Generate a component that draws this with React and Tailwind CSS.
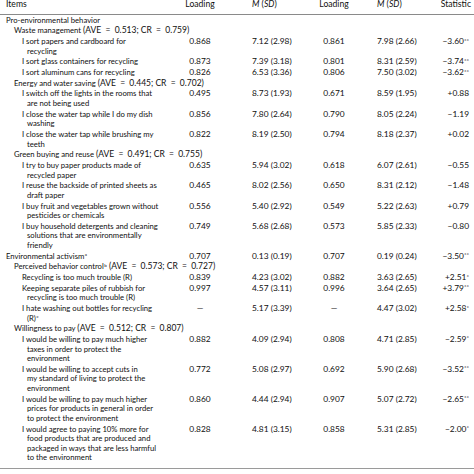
import React from "react";

const E = "\u2002=\u2002";
const rows = [
  { l: 0, t: ["Pro-environmental behavior"] },
  { l: 1, t: ["Waste management "], after: `(AVE${E}0.513; CR${E}0.759)` },
  { l: 2, t: ["I sort papers and cardboard for", "recycling"], v: ["0.868", "7.12 (2.98)", "0.861", "7.98 (2.66)", "−3.60", "**"] },
  { l: 2, t: ["I sort glass containers for recycling"], v: ["0.873", "7.39 (3.18)", "0.801", "8.31 (2.59)", "−3.74", "**"] },
  { l: 2, t: ["I sort aluminum cans for recycling"], v: ["0.826", "6.53 (3.36)", "0.806", "7.50 (3.02)", "−3.62", "**"] },
  { l: 1, t: ["Energy and water saving "], after: `(AVE${E}0.445; CR${E}0.702)` },
  { l: 2, t: ["I switch off the lights in the rooms that", "are not being used"], v: ["0.495", "8.73 (1.93)", "0.671", "8.59 (1.95)", "+0.88", ""] },
  { l: 2, t: ["I close the water tap while I do my dish", "washing"], v: ["0.856", "7.80 (2.64)", "0.790", "8.05 (2.24)", "−1.19", ""] },
  { l: 2, t: ["I close the water tap while brushing my", "teeth"], v: ["0.822", "8.19 (2.50)", "0.794", "8.18 (2.37)", "+0.02", ""] },
  { l: 1, t: ["Green buying and reuse "], after: `(AVE${E}0.491; CR${E}0.755)` },
  { l: 2, t: ["I try to buy paper products made of", "recycled paper"], v: ["0.635", "5.94 (3.02)", "0.618", "6.07 (2.61)", "−0.55", ""] },
  { l: 2, t: ["I reuse the backside of printed sheets as", "draft paper"], v: ["0.465", "8.02 (2.56)", "0.650", "8.31 (2.12)", "−1.48", ""] },
  { l: 2, t: ["I buy fruit and vegetables grown without", "pesticides or chemicals"], v: ["0.556", "5.40 (2.92)", "0.549", "5.22 (2.63)", "+0.79", ""] },
  { l: 2, t: ["I buy household detergents and cleaning", "solutions that are environmentally", "friendly"], v: ["0.749", "5.68 (2.68)", "0.573", "5.85 (2.33)", "−0.80", ""] },
  { l: 0, t: ["Environmental activism"], sup: "a", v: ["0.707", "0.13 (0.19)", "0.707", "0.19 (0.24)", "−3.50", "**"] },
  { l: 1, t: ["Perceived behavior control"], sup: "b", after: ` (AVE${E}0.573; CR${E}0.727)` },
  { l: 2, t: ["Recycling is too much trouble (R)"], v: ["0.839", "4.23 (3.02)", "0.882", "3.63 (2.65)", "+2.51", "*"] },
  { l: 2, t: ["Keeping separate piles of rubbish for", "recycling is too much trouble (R)"], v: ["0.997", "4.57 (3.11)", "0.996", "3.64 (2.65)", "+3.79", "**"] },
  { l: 2, t: ["I hate washing out bottles for recycling", "(R)"], sup: "c", v: ["—", "5.17 (3.39)", "—", "4.47 (3.02)", "+2.58", "*"] },
  { l: 1, t: ["Willingness to pay "], after: `(AVE${E}0.512; CR${E}0.807)` },
  { l: 2, t: ["I would be willing to pay much higher", "taxes in order to protect the", "environment"], v: ["0.882", "4.09 (2.94)", "0.808", "4.71 (2.85)", "−2.59", "*"] },
  { l: 2, t: ["I would be willing to accept cuts in", "my standard of living to protect the", "environment"], v: ["0.772", "5.08 (2.97)", "0.692", "5.90 (2.68)", "−3.52", "**"] },
  { l: 2, t: ["I would be willing to pay much higher", "prices for products in general in order", "to protect the environment"], v: ["0.860", "4.44 (2.94)", "0.907", "5.07 (2.72)", "−2.65", "**"] },
  { l: 2, t: ["I would agree to paying 10% more for", "food products that are produced and", "packaged in ways that are less harmful", "to the environment"], v: ["0.828", "4.81 (3.15)", "0.858", "5.31 (2.85)", "−2.00", "*"] },
];

const indent = ["pl-[6px]", "pl-[14px]", "pl-[22px]"];

function ItemText({ r }) {
  const last = r.t.length - 1;
  return (
    <div className={indent[r.l] + " text-[7.7px]"}>
      {r.t.map((line, i) => (
        <div key={i} className={i > 0 ? "pl-[5px] whitespace-nowrap" : "whitespace-nowrap"}>
          {line}
          {i === last && r.sup ? (
            <span className="relative -top-[2.5px] text-[4.5px] leading-none ml-[0.5px]">{r.sup}</span>
          ) : null}
          {i === last && r.after ? <span className="text-[8.5px]">{r.after}</span> : null}
        </div>
      ))}
    </div>
  );
}

export default function App() {
  return (
    <div
      className="w-[474px] h-[474px] bg-white text-[#0f0f0f] text-[8.4px] leading-[9.6px] overflow-hidden"
      style={{ fontFamily: "Lato, 'Open Sans', sans-serif" }}
    >
      <div className="grid grid-cols-[176px_48px_86px_48px_72px_39px] pb-[4px] border-b border-[#8a8a8a] text-[8.6px]">
        <div className="pl-[6px]">Items</div>
        <div className="text-center">Loading</div>
        <div className="pl-[28px]">
          <i>M</i> (<i>SD</i>)
        </div>
        <div className="text-center">Loading</div>
        <div className="pl-[19px]">
          <i>M</i> (<i>SD</i>)
        </div>
        <div className="text-right -mr-[2px] whitespace-nowrap">Statistic</div>
      </div>
      <div className="pb-[5px] border-b-[1.5px] border-[#9a9a9a]">
        {rows.map((r, idx) => (
          <div key={idx} className="grid grid-cols-[176px_48px_86px_48px_72px_39px] pt-[1.1px]">
            {r.v ? (
              <>
                <ItemText r={r} />
                <div className="text-center">{r.v[0]}</div>
                <div className="pl-[28px] whitespace-nowrap">{r.v[1]}</div>
                <div className="text-center">{r.v[2]}</div>
                <div className="pl-[19px] whitespace-nowrap">{r.v[3]}</div>
                <div className="text-right whitespace-nowrap">
                  {r.v[4]}
                  {r.v[5] ? (
                    <span className="relative -top-[1.5px] text-[6px] leading-none">{r.v[5]}</span>
                  ) : null}
                </div>
              </>
            ) : (
              <div className="col-span-6">
                <ItemText r={r} />
              </div>
            )}
          </div>
        ))}
      </div>
    </div>
  );
}
